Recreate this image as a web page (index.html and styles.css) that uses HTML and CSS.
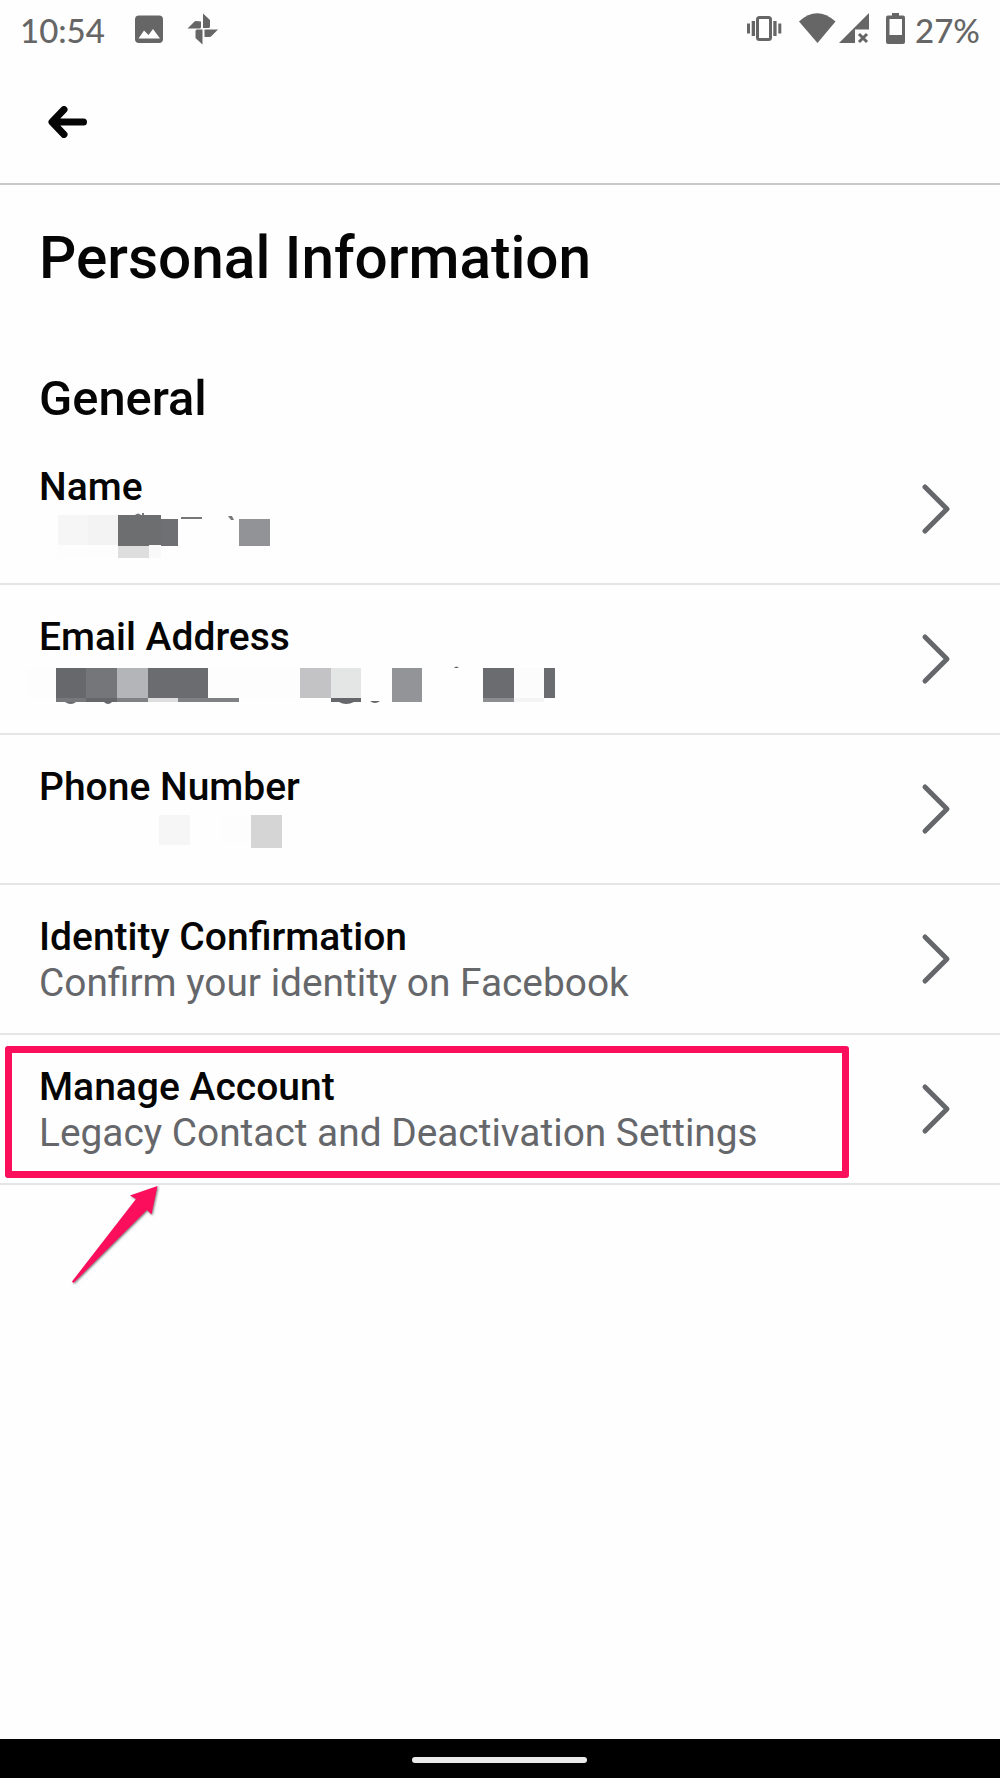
FILE: index.html
```html
<!DOCTYPE html>
<html lang="en">
<head>
  <meta charset="UTF-8">
  <meta name="viewport" content="width=device-width, initial-scale=1.0">
  <title>Personal Information</title>
  <link rel="stylesheet" href="styles.css">
</head>
<body>
  <div class="status-bar">
    <span class="clock">10:54</span>
    <svg class="status-left" width="90" height="60" viewBox="130 0 90 60">
      <path fill-rule="evenodd" d="M139 15.5h20q4 0 4 4v19.500q0 4-4 4h-20q-4 0-4-4V19.500q0-4 4-4zM138.500 38.500h21.500l-7-9.500-4.500 6-4.500-4.500z"/>
      <path d="M203 13.500l7 6.500v6.500q0 1.500-1.500 1.500H203zM201 21.500v5.500q0 1.500-1.500 1.500H187.500l6.500-6.500q1-1 2-1zM204.500 29.500H218l-6.500 6.500q-1 1-2 1h-5zM195.500 31q0-1.500 1.500-1.500h5.500v15l-7-6.500z"/>
    </svg>
    <svg class="status-right" width="170" height="60" viewBox="740 0 170 60">
      <rect x="757.500" y="17.500" width="13" height="22" rx="2" fill="none" stroke="#666" stroke-width="3"/>
      <path d="M747 23.500h3v10h-3zM751.700 21h3.300v15h-3.300zM773.300 21h3.300v15h-3.300zM778.300 23.500h3v10h-3z"/>
      <path d="M799 21.500q18-16.500 36.500 0L817.500 43z"/>
      <path d="M869 13v16.500h-14V43h-16z"/>
      <path d="M859 34l8 8m0-8l-8 8" stroke="#666" stroke-width="3"/>
      <path fill-rule="evenodd" d="M892 13h7v2.500h4q2 0 2 2V42q0 2-2 2h-15q-2 0-2-2V17.500q0-2 2-2h4zM889.500 19v16h12.500V19z"/>
    </svg>
    <span class="battery">27%</span>
  </div>

  <header class="nav">
    <svg class="back" width="40" height="32" viewBox="0 0 40 32">
      <path d="M16 3.500L4 16l12 12.500M5 16h30.500"/>
    </svg>
  </header>

  <main class="content">
    <h1>Personal Information</h1>
    <h2>General</h2>

    <div class="row">
      <div class="row-text">
        <div class="label">Name</div>
        <!-- pixelated value -->
        <svg class="mask" width="600" height="50" viewBox="0 0 600 50" shape-rendering="crispEdges">
          <rect x="58" y="6" width="30" height="30" fill="#f6f6f6"/>
          <rect x="88" y="6" width="30" height="30" fill="#f3f3f3"/>
          <rect x="58" y="36" width="60" height="13" fill="#fdfdfd"/>
          <rect x="118" y="6" width="43" height="31" fill="#6d6e70"/>
          <rect x="161" y="10" width="17" height="27" fill="#6f7073"/>
          <rect x="118" y="37" width="31" height="12" fill="#dedede"/>
          <rect x="149" y="36" width="12" height="13" fill="#f9f9f9"/>
          <rect x="181" y="8" width="21" height="2" fill="#77787a"/>
          <rect x="239" y="10" width="31" height="27" fill="#929396"/>
          <path d="M135 6q3-3 6 0zM142 6v-2h2v2zM228 7l4 0 2 4h-3z" fill="#77787a" shape-rendering="auto"/>
        </svg>
      </div>
      <svg class="chevron" width="30" height="52" viewBox="0 0 30 52"><path d="M4 4l22 22L4 48"/></svg>
    </div>

    <div class="row">
      <div class="row-text">
        <div class="label">Email Address</div>
        <svg class="mask" width="600" height="50" viewBox="0 0 600 50" shape-rendering="crispEdges">
          <rect x="26" y="9" width="30" height="30" fill="#fdfdfd"/>
          <rect x="56" y="9" width="30" height="30" fill="#66686b"/>
          <rect x="86" y="9" width="31" height="30" fill="#75767a"/>
          <rect x="117" y="9" width="31" height="30" fill="#b4b5b8"/>
          <rect x="148" y="9" width="60" height="30" fill="#6b6c70"/>
          <rect x="208" y="9" width="92" height="30" fill="#fdfdfd"/>
          <rect x="56" y="39" width="30" height="4" fill="#77787b"/>
          <rect x="86" y="39" width="31" height="4" fill="#66676a"/>
          <rect x="117" y="39" width="31" height="4" fill="#808184"/>
          <rect x="148" y="39" width="30" height="4" fill="#dedede"/>
          <rect x="178" y="39" width="61" height="4" fill="#808184"/>
          <rect x="300" y="9" width="31" height="30" fill="#c3c3c5"/>
          <rect x="331" y="9" width="30" height="30" fill="#e4e6e6"/>
          <rect x="331" y="39" width="30" height="4" fill="#66676a"/>
          <rect x="392" y="9" width="30" height="34" fill="#939497"/>
          <rect x="483" y="9" width="31" height="30" fill="#6b6c70"/>
          <rect x="483" y="39" width="31" height="4" fill="#8c8d90"/>
          <rect x="514" y="9" width="30" height="30" fill="#fcfcfc"/>
          <rect x="514" y="39" width="30" height="4" fill="#f4f4f4"/>
          <rect x="544" y="9" width="11" height="30" fill="#6b6c70"/>
          <path d="M65 43q6 4 11 0zM104 43q4 4 8 0zM339 43q7 4 15 0zM370 42q5 4 10 0zM454 9q2-3 5 0z" fill="#66676a" shape-rendering="auto"/>
        </svg>
      </div>
      <svg class="chevron" width="30" height="52" viewBox="0 0 30 52"><path d="M4 4l22 22L4 48"/></svg>
    </div>

    <div class="row">
      <div class="row-text">
        <div class="label">Phone Number</div>
        <svg class="mask" width="600" height="50" viewBox="0 0 600 50" shape-rendering="crispEdges">
          <rect x="159" y="6" width="31" height="30" fill="#f6f6f6"/>
          <rect x="221" y="6" width="30" height="28" fill="#fdfdfd"/>
          <rect x="251" y="6" width="31" height="33" fill="#d5d5d5"/>
        </svg>
      </div>
      <svg class="chevron" width="30" height="52" viewBox="0 0 30 52"><path d="M4 4l22 22L4 48"/></svg>
    </div>

    <div class="row">
      <div class="row-text">
        <div class="label">Identity Confirmation</div>
        <div class="sub">Confirm your identity on Facebook</div>
      </div>
      <svg class="chevron" width="30" height="52" viewBox="0 0 30 52"><path d="M4 4l22 22L4 48"/></svg>
    </div>

    <div class="row">
      <div class="row-text">
        <div class="label">Manage Account</div>
        <div class="sub">Legacy Contact and Deactivation Settings</div>
      </div>
      <svg class="chevron" width="30" height="52" viewBox="0 0 30 52"><path d="M4 4l22 22L4 48"/></svg>
      <div class="highlight"></div>
      <svg class="pointer" width="100" height="110" viewBox="65 1180 100 110">
        <path d="M158.500 1186L131 1195.500l6 3.500L73 1281.500l1.500 1.500L148 1210l4.500 4.500z"/>
      </svg>
    </div>
  </main>

  <footer class="gesture-bar"><div class="pill"></div></footer>
</body>
</html>
```

FILE: styles.css
```css
* {
  box-sizing: border-box;
}
body {
  margin: 0;
  height: 1778px;
  display: flex;
  flex-direction: column;
  background: #fefefe;
  color: #050505;
  font-family: Roboto, sans-serif;
  overflow: hidden;
}
svg {
  display: block;
  flex: none;
}
.status-bar {
  height: 60px;
  display: flex;
  align-items: center;
  color: #666;
  fill: #666;
  font-family: Lato, sans-serif;
  font-size: 33px;
  font-weight: 500;
  line-height: 60px;
}
.clock {
  width: 110px;
  margin-left: 20px;
}
.status-right {
  margin-left: auto;
}
.battery {
  width: 90px;
  padding-left: 5px;
}
.nav {
  height: 125px;
  padding: 46px 0 0 48px;
  border-bottom: 2px solid #c9c9c9;
}
.back {
  fill: none;
  stroke: #050505;
  stroke-width: 7;
  stroke-linecap: round;
  stroke-linejoin: round;
}
.content {
  flex: 1;
}
h1, h2 {
  margin: 0;
  padding-left: 39px;
  font-weight: 500;
}
h1 {
  height: 160px;
  padding-top: 37px;
  font-size: 58.5px;
  line-height: 72px;
}
h2 {
  height: 90px;
  padding-top: 24px;
  font-size: 48.8px;
  line-height: 60px;
}
.row {
  position: relative;
  display: flex;
  justify-content: space-between;
  align-items: center;
  height: 150px;
  padding: 0 49px 0 39px;
  border-bottom: 2px solid #e4e5e6;
}
.row-text {
  align-self: flex-start;
  padding-top: 29px;
  font-size: 39px;
  white-space: nowrap;
}
.label {
  height: 45px;
  line-height: 47px;
  font-weight: 500;
}
.sub {
  font-size: 38.85px;
  line-height: 48px;
  color: #65676b;
}
.mask {
  margin-left: -39px;
}
.chevron {
  fill: none;
  stroke: #65676b;
  stroke-width: 5;
  stroke-linecap: round;
  stroke-linejoin: round;
}
/* callout drawn over the last row */
.highlight {
  position: absolute;
  left: 5px;
  top: 11px;
  width: 844px;
  height: 132px;
  border: 7px solid #fb0f5c;
  border-radius: 3px;
}
.pointer {
  position: absolute;
  left: 64px;
  top: 145px;
  fill: #fb0f5c;
  filter: drop-shadow(1px 1px 1px rgba(0, 0, 0, 0.5));
}
.gesture-bar {
  height: 39px;
  padding: 18px 2px 0 0;
  background: #000;
}
.pill {
  width: 175px;
  height: 6px;
  margin: 0 auto;
  border-radius: 3px;
  background: #ebebeb;
}
```
